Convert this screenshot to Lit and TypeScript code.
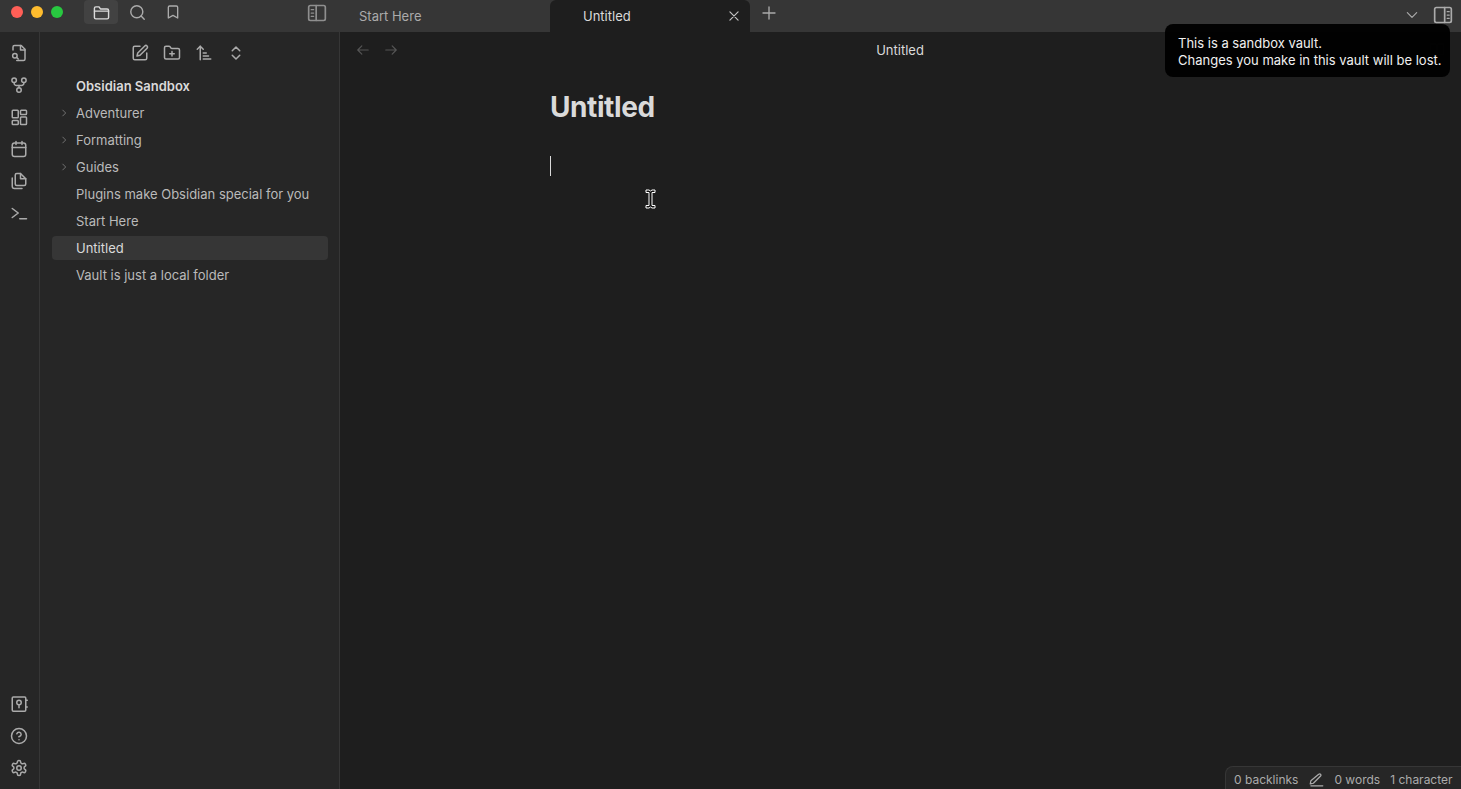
import { LitElement, html, css, svg } from "lit";
import { customElement } from "lit/decorators.js";

const ic = (size: number, body: unknown, cls = "") => html`<svg class="ic ${cls}" width=${size} height=${size} viewBox="0 0 24 24" fill="none" stroke="currentColor" stroke-width="2" stroke-linecap="round" stroke-linejoin="round">${body}</svg>`;

const I = {
  folder: svg`<path d="M2 19V6a2 2 0 0 1 2-2h4.5l2 3H20a2 2 0 0 1 2 2v10a2 2 0 0 1-2 2H4a2 2 0 0 1-2-2z"/><path d="M2 10h20"/>`,
  search: svg`<circle cx="11" cy="11" r="8.5"/><path d="m21.5 21.5-4.4-4.4"/>`,
  bookmark: svg`<path d="m19 21-7-4-7 4V5a2 2 0 0 1 2-2h10a2 2 0 0 1 2 2v16z"/>`,
  sideL: svg`<rect x="2" y="3" width="20" height="18" rx="2"/><path d="M11 3v18"/><path d="M5 8h3M5 12h3M5 16h3" stroke-width="1.5"/>`,
  sideR: svg`<rect x="2" y="3" width="20" height="18" rx="2"/><path d="M14 3v18"/><path d="M17 8h2.5M17 12h2.5M17 16h2.5" stroke-width="1.5"/>`,
  edit: svg`<path d="M12 3H5a2 2 0 0 0-2 2v14a2 2 0 0 0 2 2h14a2 2 0 0 0 2-2v-7"/><path d="M18.4 2.6a2.12 2.12 0 0 1 3 3L12 15l-4 1 1-4z"/>`,
  folderPlus: svg`<path d="M4 20h16a2 2 0 0 0 2-2V8a2 2 0 0 0-2-2h-7.9a2 2 0 0 1-1.7-.9l-.8-1.2A2 2 0 0 0 7.9 3H4a2 2 0 0 0-2 2v13a2 2 0 0 0 2 2Z"/><path d="M12 10v6M9 13h6"/>`,
  sort: svg`<path d="m3 7 4-4 4 4"/><path d="M7 3v18"/><path d="M11 12h4M11 16h7M11 20h10"/>`,
  chevrons: svg`<path d="m7 15 5 5 5-5"/><path d="m7 9 5-5 5 5"/>`,
  fileSearch: svg`<path d="M4 8V4a2 2 0 0 1 2-2h9l5 5v13a2 2 0 0 1-2 2H9"/><path d="M14 2v6h6"/><circle cx="6.5" cy="15.5" r="3"/><path d="m11 20-2.3-2.3"/>`,
  graph: svg`<circle cx="5.5" cy="5.5" r="3"/><circle cx="18.5" cy="5.5" r="3"/><circle cx="12" cy="18.5" r="3"/><path d="M5.5 8.5v1a3 3 0 0 0 3 3h7a3 3 0 0 0 3-3v-1"/><path d="M12 12.5v3"/>`,
  layout: svg`<rect x="3" y="3" width="8" height="10" rx="1"/><rect x="14" y="3" width="8" height="5.5" rx="1"/><rect x="14" y="12" width="8" height="10" rx="1"/><rect x="3" y="16.5" width="8" height="5.5" rx="1"/>`,
  calendar: svg`<rect x="3" y="4" width="18" height="18" rx="3"/><path d="M16 2v4M8 2v4M3 10h18"/>`,
  copy: svg`<path d="M16 22H6a3 3 0 0 1-3-3V8"/><path d="M14 2H9a2 2 0 0 0-2 2v12a2 2 0 0 0 2 2h10a2 2 0 0 0 2-2V9z"/><path d="M14 2v7h7"/>`,
  term: svg`<path d="m3 6 8 6-8 6"/><path d="M13 19.5h9"/>`,
  vault: svg`<rect x="3" y="2.5" width="18" height="19" rx="1.5"/><circle cx="12" cy="10" r="3"/><path d="M12 13v4M21 7h2M21 16h2"/>`,
  help: svg`<circle cx="12" cy="12" r="10"/><path d="M9.1 9a3 3 0 0 1 5.8 1c0 2-3 3-3 3"/><path d="M12 17h.01"/>`,
  gear: svg`<path d="M12.2 2h-.4a2 2 0 0 0-2 2v.2a2 2 0 0 1-1 1.7l-.4.3a2 2 0 0 1-2 0l-.2-.1a2 2 0 0 0-2.7.7l-.2.4a2 2 0 0 0 .7 2.7l.2.1a2 2 0 0 1 1 1.7v.5a2 2 0 0 1-1 1.7l-.2.1a2 2 0 0 0-.7 2.7l.2.4a2 2 0 0 0 2.7.7l.2-.1a2 2 0 0 1 2 0l.4.3a2 2 0 0 1 1 1.7v.2a2 2 0 0 0 2 2h.4a2 2 0 0 0 2-2v-.2a2 2 0 0 1 1-1.7l.4-.3a2 2 0 0 1 2 0l.2.1a2 2 0 0 0 2.7-.7l.2-.4a2 2 0 0 0-.7-2.7l-.2-.1a2 2 0 0 1-1-1.7v-.5a2 2 0 0 1 1-1.7l.2-.1a2 2 0 0 0 .7-2.7l-.2-.4a2 2 0 0 0-2.7-.7l-.2.1a2 2 0 0 1-2 0l-.4-.3a2 2 0 0 1-1-1.7V4a2 2 0 0 0-2-2z"/><circle cx="12" cy="12" r="3"/>`,
  chevronR: svg`<path d="m9 5 7 7-7 7"/>`,
  chevronD: svg`<path d="m4 8 8 8 8-8"/>`,
  x: svg`<path d="M19 5 5 19M5 5l14 14"/>`,
  plus: svg`<path d="M12 3v18M3 12h18"/>`,
  left: svg`<path d="M21 12H3M10 5l-7 7 7 7"/>`,
  right: svg`<path d="M3 12h18M14 5l7 7-7 7"/>`,
  pencil: svg`<path d="M3 22h19"/><path d="M15.5 3.5a2.12 2.12 0 0 1 3 3L7 18l-5 1 1-5z"/>`,
  book: svg`<path d="M2 3h7a3 3 0 0 1 3 3v15a2.5 2.5 0 0 0-2.5-2.5H2z"/><path d="M22 3h-7a3 3 0 0 0-3 3v15a2.5 2.5 0 0 1 2.5-2.5H22z"/>`,
};

@customElement("app-root")
export class AppRoot extends LitElement {
  static styles = css`
    :host { display: grid; grid-template-columns: 40px 300px 1fr; grid-template-rows: 32px 1fr; height: 100vh; width: 100%; overflow: hidden; position: relative; background: #1e1e1e; color: #dadada; font-family: Inter, "Noto Sans", sans-serif; font-size: 13px; }
    .ic { display: block; flex: none; }

    .titlebar { grid-column: 1 / 3; background: #363636; display: flex; align-items: flex-start; }
    .lights { display: flex; gap: 8px; padding: 6px 0 0 11px; width: 84px; box-sizing: border-box; }
    .light { width: 12px; height: 12px; border-radius: 50%; }
    .red { background: #ff5f57; } .yellow { background: #febc2e; } .green { background: #28c840; }
    .side-tabs { display: flex; gap: 2px; color: #ababab; }
    .side-tab { width: 34px; height: 24px; border-radius: 4px; display: flex; align-items: center; justify-content: center; }
    .side-tab.on { background: #424242; color: #dadada; }
    .collapse-l { margin: 3px 0 0 auto; margin-right: 13px; color: #8f8f8f; width: 20px; height: 18px; }

    .tabbar { background: #363636; display: flex; align-items: flex-start; position: relative; padding-left: 0; }
    .tab { width: 210px; height: 32px; box-sizing: border-box; padding: 0 0 0 19px; display: flex; align-items: center; color: #ababab; font-size: 13px; }
    .tab.active { width: 200px; background: #1e1e1e; border-radius: 6px 6px 0 0; color: #dadada; padding: 0 9px 0 33px; justify-content: space-between; padding-left: 33px; margin-left: 0; }
    .tab .close { color: #c4c4c4; }
    .tab.active span { margin-left: 0; }
    .plus { color: #ababab; margin: 5px 0 0 11px; }
    .tab-right { margin: 5px 8px 0 auto; display: flex; align-items: center; gap: 14px; color: #ababab; }

    .ribbon { background: #262626; border-right: 1px solid #363636; display: flex; flex-direction: column; align-items: center; justify-content: space-between; padding: 12px 0 12px; box-sizing: border-box; color: #ababab; min-height: 0; }
    .ribbon > div { display: flex; flex-direction: column; gap: 14px; padding-right: 5px; box-sizing: border-box; width: 100%; align-items: center; padding-left: 4px;}

    .sidebar { background: #262626; border-right: 1px solid #363636; box-sizing: border-box; min-width: 0; }
    .side-actions { display: flex; justify-content: center; gap: 14px; height: 18px; padding-top: 12px; color: #ababab; padding-right: 3px; }
    .tree { padding: 12px 11px 0 12px; }
    .row { height: 24px; margin-bottom: 3px; display: flex; align-items: center; border-radius: 4px; padding-left: 24px; color: #bababa; position: relative; font-size: 13px; line-height: 24px; }
    .row.root { color: #dadada; font-weight: 600; }
    .row.sel { background: #363636; color: #dadada; }
    .row .chev { position: absolute; left: 7px; top: 7px; color: #7f7f7f; }

    .main { position: relative; min-width: 0; background: #1e1e1e; }
    .viewhead { display: grid; grid-template-columns: 1fr auto 1fr; align-items: center; height: 36px; padding: 0 16px; }
    .nav { display: flex; gap: 14px; color: #555; padding-top: 0; }
    .viewtitle { font-size: 13px; color: #dadada; padding-right: 1px; }
    .acts { display: flex; justify-content: flex-end; gap: 12px; color: #3a3a3a; }
    .doc { padding: 21px 0 0 210px; }
    h1 { margin: 0; font-size: 28px; line-height: 36px; font-weight: 700; color: #dadada; letter-spacing: -0.42px; }
    .caret { width: 1px; height: 20px; background: #dadada; margin-top: 31px; }

    .mouse { position: absolute; left: 305px; top: 157px; }

    .notice { position: absolute; top: 24px; right: 11px; width: 285px; height: 53px; box-sizing: border-box; background: rgba(0,0,0,.96); color: #f0f0f0; border-radius: 8px; padding: 11px 13px; font-size: 13px; line-height: 16.5px; white-space: nowrap; }
    .status { position: absolute; right: 0; bottom: 0; height: 23px; width: 236px; box-sizing: border-box; background: #262626; border: 1px solid #363636; border-right: 0; border-bottom: 0; border-radius: 8px 0 0 0; color: #ababab; font-size: 12px; display: flex; align-items: center; padding: 2px 0 0 8px; white-space: nowrap; }
    .status .pen { margin: 0 10px 0 11px; }
    .status .w { margin-right: 10px; }
  `;

  render() {
    return html`
      <div class="titlebar">
        <div class="lights"><div class="light red"></div><div class="light yellow"></div><div class="light green"></div></div>
        <div class="side-tabs">
          <div class="side-tab on">${ic(17, I.folder)}</div>
          <div class="side-tab">${ic(17, I.search)}</div>
          <div class="side-tab">${ic(16, I.bookmark)}</div>
        </div>
        <div class="collapse-l">${ic(20, I.sideL)}</div>
      </div>
      <div class="tabbar">
        <div class="tab"><span>Start Here</span></div>
        <div class="tab active"><span>Untitled</span><span class="close">${ic(14, I.x)}</span></div>
        <div class="plus">${ic(16, I.plus)}</div>
        <div class="tab-right">${ic(14, I.chevronD)}${ic(20, I.sideR)}</div>
      </div>
      <div class="ribbon">
        <div>
          ${[I.fileSearch, I.graph, I.layout, I.calendar, I.copy, I.term].map((p) => ic(18, p))}
        </div>
        <div>
          ${[I.vault, I.help, I.gear].map((p) => ic(18, p))}
        </div>
      </div>
      <div class="sidebar">
        <div class="side-actions">
          ${[I.edit, I.folderPlus, I.sort, I.chevrons].map((p) => ic(18, p))}
        </div>
        <div class="tree">
          <div class="row root">Obsidian Sandbox</div>
          ${["Adventurer", "Formatting", "Guides"].map((n) => html`<div class="row"><span class="chev">${ic(10, I.chevronR)}</span>${n}</div>`)}
          <div class="row">Plugins make Obsidian special for you</div>
          <div class="row">Start Here</div>
          <div class="row sel">Untitled</div>
          <div class="row">Vault is just a local folder</div>
        </div>
      </div>
      <div class="main">
        <div class="viewhead">
          <div class="nav">${ic(14, I.left)}${ic(14, I.right)}</div>
          <div class="viewtitle">Untitled</div>
          <div class="acts">${ic(16, I.book)}</div>
        </div>
        <div class="doc">
          <h1>Untitled</h1>
          <div class="caret"></div>
        </div>
        <svg class="ic mouse" width="11" height="20" viewBox="0 0 11 20" fill="#111" stroke="#fff" stroke-width="1"><path d="M1 1h3l1.500 1L7 1h3v2.500H7v13h3V19H7l-1.500-1L4 19H1v-2.500h3v-13H1z"/></svg>
      </div>
      <div class="notice">This is a sandbox vault.<br />Changes you make in this vault will be lost.</div>
      <div class="status"><span>0 backlinks</span><span class="pen">${ic(15, I.pencil)}</span><span class="w">0 words</span><span>1 character</span></div>
    `;
  }
}
